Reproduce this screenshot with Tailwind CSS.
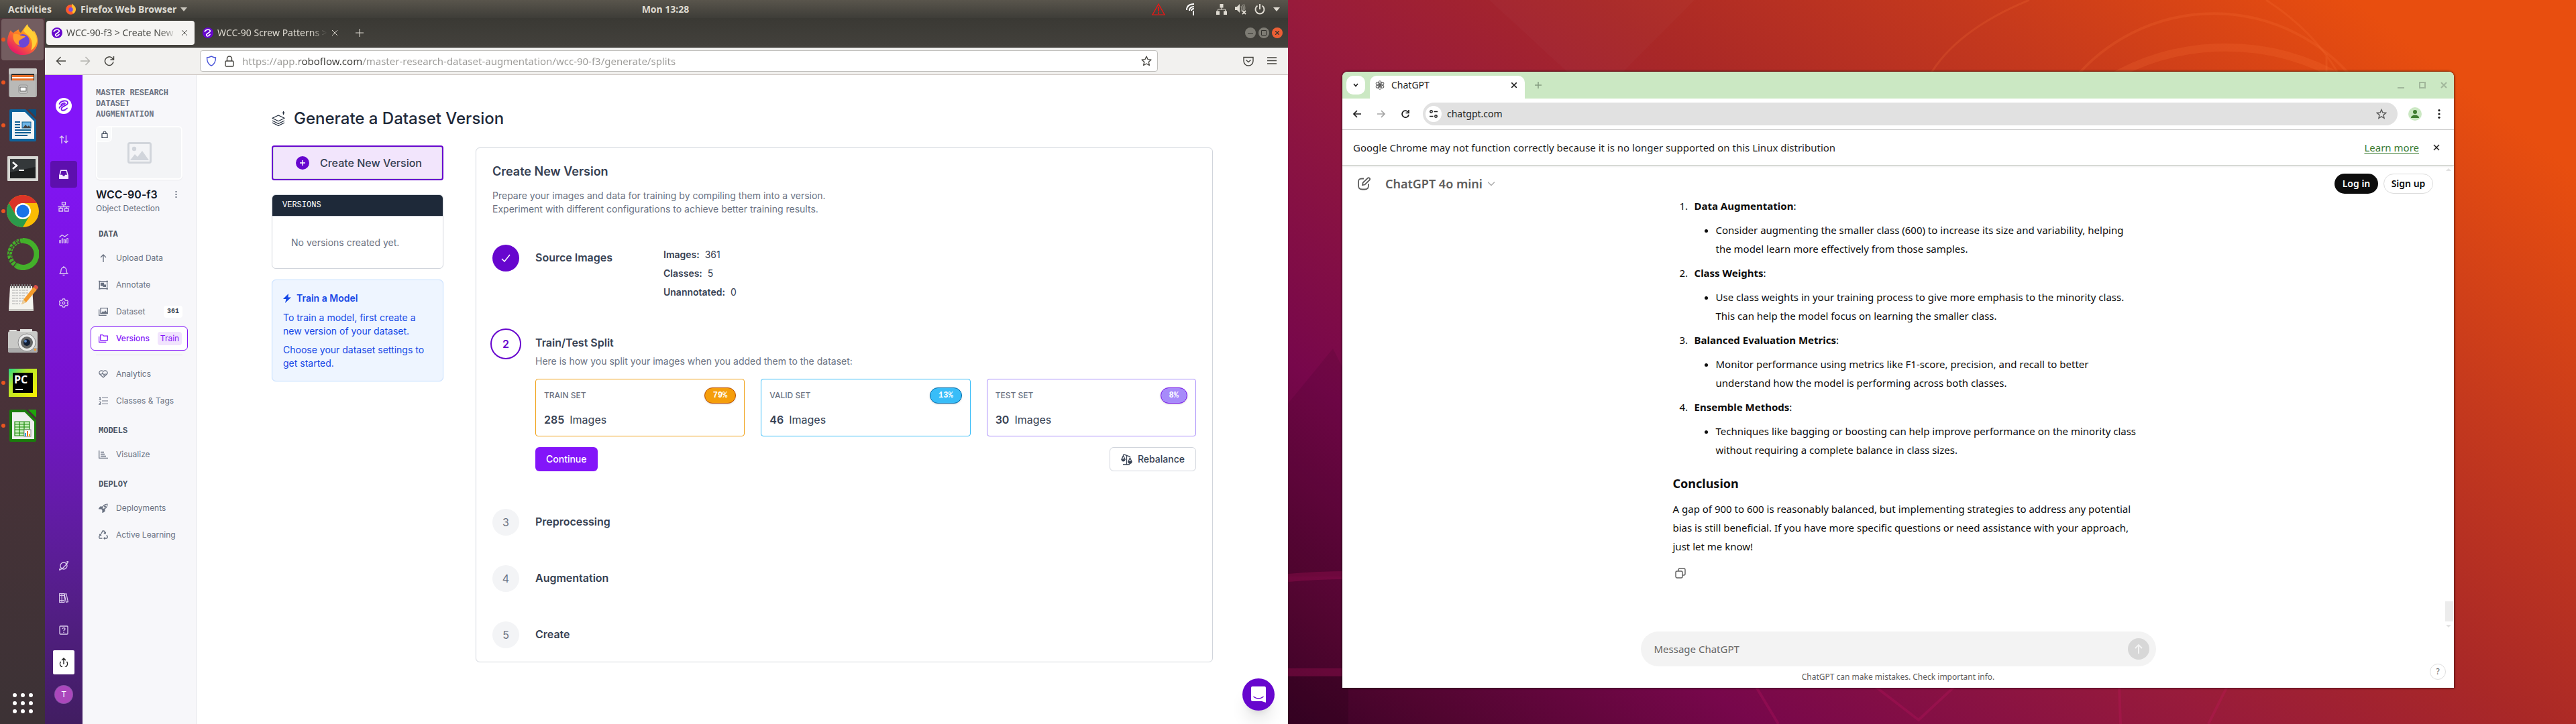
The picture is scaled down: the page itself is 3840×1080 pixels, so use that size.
<!DOCTYPE html>
<html lang="en">
<head>
  <meta charset="UTF-8">
  <meta name="viewport" content="width=device-width, initial-scale=1.0">
  <title>Desktop</title>
  <script src="https://cdn.jsdelivr.net/npm/@tailwindcss/browser@4"></script>
</head>
<body class="flex h-screen overflow-hidden bg-black font-['Inter',sans-serif]">

  <!-- Left monitor -->
  <div class="flex h-full w-1/2 flex-col">
    <!-- Top panel -->
    <header class="grid h-[27px] shrink-0 grid-cols-3 items-center bg-linear-to-b from-[#59554c] to-[#3e3d38] px-3 font-['Noto_Sans',sans-serif] text-sm font-bold text-[#dfdbd2]">
      <div class="flex items-center gap-5">
        <button>Activities</button>
        <button class="flex items-center gap-1.5">
          <svg class="size-[17px]" viewBox="0 0 48 48"><circle cx="24" cy="26" r="21" fill="#ff5a2c"/><path d="M28 1c9 7 18 14 17 26-1 8-5 14-11 17l-6-14z" fill="#ffbd2e"/><circle cx="24" cy="26" r="9" fill="#7b4ddb"/></svg>
          Firefox Web Browser
          <svg class="h-1.5 w-2.5" viewBox="0 0 10 6"><path d="M0 0h10L5 6z" fill="#c9c5bc"/></svg>
        </button>
      </div>
      <time class="ml-16 text-center">Mon 13:28</time>
      <div class="flex items-center justify-end text-[#dfdbd2]">
        <svg class="mr-[30px] h-[18px] w-5" viewBox="0 0 20 18" fill="none" stroke="#f11" stroke-width="1.2"><path d="M10 1 1 17h18z"/><path d="M10 6v6M10 13.500v2" stroke-width="2"/></svg>
        <svg class="mr-[30px] h-5 w-4" viewBox="0 0 16 20" fill="none" stroke="#fff" stroke-width="2"><path d="M2 11C2 5 6 2 13 2M6 12c0-4 2-6 7-6M9 12c0-2 2-3 4-3M12 12v7"/></svg>
        <svg class="mr-3 size-4" viewBox="0 0 16 16" fill="currentColor"><path d="M5.500 0h5v5.500h-5zM0 10.500h5V16H0zM11 10.500h5V16h-5z"/><path d="M8 5v3.500M2.500 11V8h11v3" fill="none" stroke="currentColor"/></svg>
        <svg class="mr-3 size-[17px]" viewBox="0 0 17 17" fill="currentColor"><path d="M0 5h3l4-4v13l-4-4H0z"/><path d="M9 4q2 4 0 8M11 2q3 6 0 10M13 1q3 6 1 9" fill="none" stroke="#8b887f" stroke-width="1.500"/><path d="m11 11 5 5m0-5-5 5" stroke="currentColor" stroke-width="1.800"/></svg>
        <svg class="mr-3 size-4" viewBox="0 0 16 16" fill="none" stroke="currentColor" stroke-width="2"><path d="M8 0v8M4.500 2.500a6.500 6.500 0 1 0 7 0"/></svg>
        <svg class="h-1.5 w-2.5" viewBox="0 0 10 6"><path d="M0 0h10L5 6z" fill="currentColor"/></svg>
      </div>
    </header>

    <div class="flex min-h-0 flex-1">
      <!-- Dock -->
      <nav class="flex w-[67px] shrink-0 flex-col items-center bg-linear-to-b from-[#50363c] via-[#4a3239] to-[#3c3235]">
        <button class="relative flex h-16 w-full items-center justify-center">
          <span class="absolute inset-x-[2px] inset-y-px rounded bg-[#735d60]"></span>
          <span class="absolute left-[2px] h-1.5 w-1.5 rounded-full bg-[#e95420]"></span>
          <svg class="relative size-12" viewBox="0 0 48 48"><defs><linearGradient id="fox" x1="1" y1="0" x2=".3" y2="1"><stop offset="0" stop-color="#fff04a"/><stop offset=".45" stop-color="#ff8a1e"/><stop offset="1" stop-color="#e5156b"/></linearGradient></defs><path d="M6 10c1 2 2 3 4 4 2-2 5-4 8-5 0 2 1 4 3 5 3-4 6-9 10-13 1 6 5 8 8 12 1-1 1-2 1-3 5 6 7 13 6 20-2 11-11 17-22 17S2 39 1 28c0-8 2-13 5-18z" fill="url(#fox)"/><circle cx="24" cy="26" r="10" fill="#6b46d6"/><path d="M10 16c4-1 8 0 11 2l7 1c-2 3-4 3-7 5-4 2-4 6-1 9-7-1-12-9-10-17z" fill="#ff9a2b"/><path d="M30 2c7 8 15 14 15 24-1 6-4 11-9 14 3-7 2-14-1-19-3-4-7-6-10-10z" fill="#ffcf35"/></svg>
        </button>
        <button class="relative flex h-16 w-full items-center justify-center">
          <span class="absolute left-[2px] h-1.5 w-1.5 rounded-full bg-[#e95420]"></span>
          <svg class="size-12" viewBox="0 0 48 48"><rect x="3" y="3" width="42" height="43" rx="3" fill="#a9a9a7"/><rect x="3" y="3" width="42" height="9" rx="2" fill="#c8c8c6"/><path d="M7 11h34v10H7z" fill="#2c2c2c"/><path d="M8 13h32v8H8z" fill="#e8702a"/><path d="M8 16h32v2H8z" fill="#fff"/><path d="M5 21h38v25H5z" fill="#b9b9b7"/><rect x="18" y="28" width="13" height="12" rx="2" fill="#d8d8d6" stroke="#8b8b8b"/><rect x="20" y="31" width="9" height="6" fill="#fff" stroke="#555"/></svg>
        </button>
        <button class="relative flex h-16 w-full items-center justify-center">
          <span class="absolute left-[2px] h-1.5 w-1.5 rounded-full bg-[#e95420]"></span>
          <svg class="size-12" viewBox="0 0 48 48"><path d="M6 0h22l16 16v30a2 2 0 0 1-2 2H6a2 2 0 0 1-2-2V2a2 2 0 0 1 2-2z" fill="#0e639c"/><path d="M32 0h12v12z" fill="#0b4f7f"/><path d="M8 4h19l14 14v26H8z" fill="#f3f5f7"/><path d="M12 19h8M12 23h8M12 27h8M12 31h24M12 35h24M12 39h19" stroke="#0c5d92" stroke-width="2"/><rect x="23" y="19" width="13" height="9" fill="#6fb4e5" stroke="#0c5d92"/><path d="m24 28 4-5 3 3 2-2 3 4z" fill="#444"/></svg>
        </button>
        <button class="relative flex h-16 w-full items-center justify-center">
          <svg class="size-12" viewBox="0 0 48 48"><rect x="1" y="6" width="46" height="37" rx="1" fill="#d7d7d3"/><rect x="5" y="10" width="38" height="29" fill="#1d1f20"/><path d="M5 10h38v12L5 30z" fill="#34383a"/><path d="m9 15 6 5-6 5" fill="none" stroke="#fff" stroke-width="2.500"/><path d="M18 27h8" stroke="#fff" stroke-width="2"/></svg>
        </button>
        <button class="relative flex h-16 w-full items-center justify-center">
          <span class="absolute left-[2px] h-1.5 w-1.5 rounded-full bg-[#e95420]"></span>
          <svg class="size-12" viewBox="0 0 48 48"><circle cx="24" cy="24" r="24" fill="#fbbc04"/><path d="M3.200 12A24 24 0 0 1 44.800 12H24a12 12 0 0 0-10.400 18z" fill="#db3427"/><path d="M3.200 12A24 24 0 0 0 24 48l10.400-18A12 12 0 0 1 13.600 30z" fill="#2b9a4b"/><circle cx="24" cy="24" r="12" fill="#fff"/><circle cx="24" cy="24" r="9.500" fill="#1a73e8"/></svg>
        </button>
        <button class="relative flex h-16 w-full items-center justify-center">
          <svg class="size-12" viewBox="0 0 48 48" fill="none" stroke="#43b02a"><path d="M24 4a20 20 0 1 1-10 37" stroke-width="8"/><path d="M24 4A20 20 0 0 0 14 41" stroke-width="7" stroke-dasharray="4 1.500"/><path d="m6 14 12-8M2 26l8-14M3 36l6-14M14 3l8 6" stroke="#4c343a"/></svg>
        </button>
        <button class="relative flex h-16 w-full items-center justify-center">
          <svg class="size-12" viewBox="0 0 48 48"><path d="M5 8h33l2 36H3z" fill="#f4f3ef"/><path d="M3 42h37v3H3z" fill="#c9c8c3"/><path d="M8 14h25M8 18h25M8 22h20M8 26h18M8 30h16M8 34h12" stroke="#aaa" stroke-dasharray="4 1"/><path d="M7 5v6M11 5v6M15 5v6M19 5v6M23 5v6M27 5v6M31 5v6M35 5v6" stroke="#777" stroke-width="2"/><path d="m22 35 3-7 15-19 5 4-16 19z" fill="#f39a2d"/><path d="m40 9 2-3q4 0 5 4l-2 3z" fill="#e0524a"/><path d="m22 35 3-7 4 4z" fill="#e9cfa0"/></svg>
        </button>
        <button class="relative flex h-16 w-full items-center justify-center">
          <svg class="size-12" viewBox="0 0 48 48"><rect x="2" y="11" width="44" height="32" rx="3" fill="#c9c9c7"/><path d="M4 11V9h10l2 2zM20 8h18v4H20z" fill="#e2e2e0"/><path d="M2 36h44v5a2 2 0 0 1-2 2H4a2 2 0 0 1-2-2z" fill="#aaa"/><circle cx="30" cy="28" r="13" fill="#e9e9e9" stroke="#8a8a8a"/><circle cx="30" cy="28" r="9" fill="#666"/><circle cx="30" cy="28" r="5" fill="#111d33"/><circle cx="28" cy="26" r="2" fill="#5e86c5"/><path d="M41 37h3v3h-3z" fill="#f39a2d"/></svg>
        </button>
        <button class="relative flex h-16 w-full items-center justify-center">
          <span class="absolute left-[2px] h-1.5 w-1.5 rounded-full bg-[#e95420]"></span>
          <svg class="size-12" viewBox="0 0 48 48"><defs><linearGradient id="pc" x1="0" y1="0" x2="1" y2="1"><stop offset="0" stop-color="#21d789"/><stop offset=".35" stop-color="#b6e62a"/><stop offset="1" stop-color="#fcf000"/></linearGradient></defs><rect x="3" y="3" width="42" height="42" fill="url(#pc)"/><rect x="9" y="9" width="30" height="30" fill="#000"/><text x="11" y="25" fill="#fff" font-family="Open Sans" font-weight="700" font-size="16">PC</text><path d="M13 34h11" stroke="#fff" stroke-width="2"/></svg>
        </button>
        <button class="relative flex h-16 w-full items-center justify-center">
          <span class="absolute left-[2px] h-1.5 w-1.5 rounded-full bg-[#e95420]"></span>
          <svg class="size-12" viewBox="0 0 48 48"><path d="M6 0h22l16 16v30a2 2 0 0 1-2 2H6a2 2 0 0 1-2-2V2a2 2 0 0 1 2-2z" fill="#1a7d0c"/><path d="M32 0h12v12z" fill="#1fa50c"/><path d="M8 4h19l14 14v26H8z" fill="#eee"/><path d="M12 18h22v21H12z" fill="#c8f0bd"/><path d="M12 18h22v21H12zM12 22h22M12 26h22M12 30h22M12 35h22M19 18v21M26 18v21" fill="none" stroke="#1c8a0c" stroke-width="1.200"/><rect x="26" y="30" width="10" height="10" fill="#fff" stroke="#888"/><path d="M28 40v-5" stroke="#2a9fe0" stroke-width="2"/><path d="M31 40v-8" stroke="#e8702a" stroke-width="2"/><path d="M34 40v-4" stroke="#f2b200" stroke-width="2"/></svg>
        </button>
        <button class="mt-auto mb-4 grid grid-cols-3 gap-1.5" aria-label="Show applications">
          <i class="size-1.5 rounded-full bg-white"></i><i class="size-1.5 rounded-full bg-white"></i><i class="size-1.5 rounded-full bg-white"></i>
          <i class="size-1.5 rounded-full bg-white"></i><i class="size-1.5 rounded-full bg-white"></i><i class="size-1.5 rounded-full bg-white"></i>
          <i class="size-1.5 rounded-full bg-white"></i><i class="size-1.5 rounded-full bg-white"></i><i class="size-1.5 rounded-full bg-white"></i>
        </button>
      </nav>

      <!-- Firefox -->
      <section class="flex min-w-0 flex-1 flex-col bg-white">
        <div class="flex h-11 shrink-0 items-center border-b border-[#2b2a27] bg-linear-to-b from-[#3a3934] to-[#43413c] pr-2 pl-[2px] font-['Noto_Sans',sans-serif] text-sm text-[#dfdbd2]">
          <div class="flex h-9 w-[221px] items-center gap-1.5 rounded bg-[#f5f4f2] pr-2.5 pl-2 text-[#4a4a46]">
            <svg class="size-4 shrink-0" viewBox="0 0 24 24"><circle cx="12" cy="12" r="12" fill="#6706ce"/><path d="M5 9C7 4 16 3.500 17 7.500S7.500 13 8.500 17s6 2 8-1.500" fill="none" stroke="#fff" stroke-width="2.500" stroke-linecap="round"/></svg>
            <span class="flex-1 mask-r-from-85% whitespace-nowrap">WCC-90-f3 &gt; Create New</span>
            <svg class="size-2.5 shrink-0" viewBox="0 0 10 10" stroke="currentColor"><path d="m1 1 8 8m0-8-8 8"/></svg>
          </div>
          <div class="ml-1 flex h-9 w-[220px] items-center gap-1.5 pr-2.5 pl-2">
            <svg class="size-4 shrink-0" viewBox="0 0 24 24"><circle cx="12" cy="12" r="12" fill="#6706ce"/><path d="M5 9C7 4 16 3.500 17 7.500S7.500 13 8.500 17s6 2 8-1.500" fill="none" stroke="#fff" stroke-width="2.500" stroke-linecap="round"/></svg>
            <span class="flex-1 mask-r-from-85% whitespace-nowrap">WCC-90 Screw Patterns &gt;</span>
            <svg class="size-2.5 shrink-0" viewBox="0 0 10 10" stroke="currentColor"><path d="m1 1 8 8m0-8-8 8"/></svg>
          </div>
          <button class="ml-4" aria-label="New tab"><svg class="size-3" viewBox="0 0 12 12" stroke="currentColor"><path d="M6 0v12M0 6h12"/></svg></button>
          <div class="ml-auto flex gap-1">
            <button class="flex size-4 items-center justify-center rounded-full bg-[#7e7c74]" aria-label="Minimize"><svg class="size-2" viewBox="0 0 8 8" stroke="#33322e"><path d="M0 4.500h8"/></svg></button>
            <button class="flex size-4 items-center justify-center rounded-full bg-[#7e7c74]" aria-label="Maximize"><svg class="size-2" viewBox="0 0 8 8" fill="none" stroke="#33322e"><path d="M.5.500h7v7h-7z"/></svg></button>
            <button class="flex size-4 items-center justify-center rounded-full bg-[#ec5f35]" aria-label="Close"><svg class="size-1.5" viewBox="0 0 6 6" stroke="#33322e" stroke-width="1.300"><path d="m0 0 6 6m0-6L0 6"/></svg></button>
          </div>
        </div>
        <div class="flex h-[41px] shrink-0 items-center border-b border-[#c8c0bb] bg-[#f2f1ef] pr-4 pl-4 text-[#45443f]">
          <button aria-label="Back"><svg class="size-4" viewBox="0 0 16 16" fill="none" stroke="currentColor" stroke-width="1.400"><path d="M15 8H1.500m6-6-6 6 6 6"/></svg></button>
          <button class="ml-5 text-[#b3b2af]" aria-label="Forward"><svg class="size-4" viewBox="0 0 16 16" fill="none" stroke="currentColor" stroke-width="1.400"><path d="M1 8h13.500m-6-6 6 6-6 6"/></svg></button>
          <button class="ml-5" aria-label="Reload"><svg class="size-4" viewBox="0 0 16 16" fill="none" stroke="currentColor" stroke-width="1.500"><path d="M14 9a6.300 6.300 0 1 1-2-5.500L14.500 6"/><path d="M14.500 1v5h-5"/></svg></button>
          <div class="ml-[127px] flex h-8 flex-1 items-center rounded border border-[#c0bfbc] bg-white pr-2 pl-2">
            <svg class="size-4" viewBox="0 0 16 16" fill="none" stroke="#4a56d8" stroke-width="1.400"><path d="M8 1c2 1 4 2 6.500 2 0 6-2 10-6.500 12C3.500 13 1.500 9 1.500 3 4 3 6 2 8 1z"/></svg>
            <svg class="ml-3 h-[17px] w-3.5" viewBox="0 0 14 17" fill="none" stroke="currentColor" stroke-width="1.400"><rect x="1" y="8" width="12" height="8" rx="1.500"/><path d="M3.500 8V4.500a3.500 3.500 0 0 1 7 0V8"/></svg>
            <input aria-label="Address" class="ml-3 flex-1 bg-[linear-gradient(to_right,#9a9996_85px,#3a3935_85px,#3a3935_179px,#9a9996_179px)] bg-clip-text font-['Noto_Sans',sans-serif] text-[15px] text-transparent" value="https://app.roboflow.com/master-research-dataset-augmentation/wcc-90-f3/generate/splits">
            <svg class="size-4" viewBox="0 0 16 16" fill="none" stroke="currentColor" stroke-width="1.300" stroke-linejoin="round"><path d="m8 1 2 4.600 5 .5-3.700 3.400 1 5L8 12l-4.300 2.500 1-5L1 6.100l5-.5z"/></svg>
          </div>
          <svg class="ml-[127px] size-4" viewBox="0 0 16 16" fill="none" stroke="currentColor" stroke-width="1.400"><path d="M1 2.500h14V8A7 7 0 0 1 1 8z"/><path d="m4.500 6.500 3.500 3 3.500-3"/></svg>
          <button class="mr-px ml-5" aria-label="Menu"><svg class="h-3 w-3.5" viewBox="0 0 14 12" stroke="currentColor" stroke-width="1.400"><path d="M0 1h14M0 5.500h14M0 10h14"/></svg></button>
        </div>

        <div class="flex min-h-0 flex-1">
          <!-- Icon rail -->
          <nav class="flex w-14 shrink-0 flex-col items-center bg-linear-to-b from-[#8315f9] from-10% via-[#7512cc] via-50% to-[#411d61] pt-[34px] pb-5 text-[#dccdee]">
            <svg class="mb-[18px] size-6 shrink-0" viewBox="0 0 24 24"><circle cx="12" cy="12" r="12" fill="#fff"/><path d="M5.500 9C8 3.500 17.500 3 18 7.500c.3 4-8.500 4-9.500 8.500-.7 3.500 4.500 4 8.500-.5M8 10.500c2-3 6-3.500 6-2s-7 2.500-8.500 6.500" fill="none" stroke="#7a14ee" stroke-width="1.800" stroke-linecap="round"/></svg>
            <button class="flex size-10 items-center justify-center" aria-label="Transfers"><svg class="h-3 w-3.5" viewBox="0 0 14 12" fill="none" stroke="currentColor" stroke-width="1.400"><path d="M4 12V1M1 4l3-3 3 3M10.500 0v11M7.500 8l3 3 3-3"/></svg></button>
            <button class="mt-3 flex size-10 items-center justify-center rounded bg-[#5d0fae] text-[#f3e8ff]" aria-label="Projects"><svg class="size-3.5" viewBox="0 0 14 14" fill="none" stroke="currentColor" stroke-width="1.500"><path d="M2.800 1.200h8.400L13.200 9v4H.800V9z"/><path d="M1 8.500h3.500l1 2h3l1-2H13V13H1z" fill="currentColor"/></svg></button>
            <button class="mt-1 flex h-12 items-center" aria-label="Workflows"><svg class="h-[15px] w-[18px]" viewBox="0 0 18 15" fill="none" stroke="currentColor" stroke-width="1.300"><path d="M6.500.700h5v4h-5zM2 10h5.500v4H2zM10.500 10H16v4h-5.500zM9 4.700v2.800M.500 7.500h17M4.700 7.500V10M13.300 7.500V10"/></svg></button>
            <button class="flex h-12 items-center" aria-label="Monitoring"><svg class="size-3.5" viewBox="0 0 14 14" fill="none" stroke="currentColor"><path d="m.5 5 4-3.500 4 2.500L13.500.500" stroke-width="1.400"/><path d="M.700 9.500h1.600v4H.700zM4.300 7h1.600v6.500H4.300zM8 8.500h1.600v5H8zM11.700 6.500h1.600v7h-1.600z"/></svg></button>
            <button class="flex h-12 items-center" aria-label="Notifications"><svg class="size-3.5" viewBox="0 0 14 14" fill="none" stroke="currentColor" stroke-width="1.300"><path d="M7 0v2M1.500 11c1-1 1.500-2 1.500-5a4 4 0 0 1 8 0c0 3 .5 4 1.500 5zM5.500 13.300h3"/></svg></button>
            <button class="flex h-12 items-center" aria-label="Settings"><svg class="size-3.5" viewBox="0 0 14 14" fill="none" stroke="currentColor" stroke-width="1.300" stroke-linejoin="round"><path d="M5.500.800h3L9 2.800l1.300.8 2-.6 1.400 2.500L12.200 7l1.500 1.500-1.400 2.500-2-.6-1.300.8-.5 2h-3l-.5-2-1.300-.8-2 .6L.300 8.500 1.800 7 .300 5.500 1.700 3l2 .6L5 2.800z"/><circle cx="7" cy="7" r="1.800"/></svg></button>
            <button class="mt-auto flex h-12 items-center" aria-label="Universe"><svg class="size-3.5" viewBox="0 0 14 14" fill="none" stroke="currentColor" stroke-width="1.300"><circle cx="7" cy="7" r="5"/><path d="M2.500 9.500C-1 14.500.500 14.500 6 10c5-4.500 9.500-10.500 7-9.500L10.500 1.500"/></svg></button>
            <button class="flex h-12 items-center" aria-label="Docs"><svg class="size-3.5" viewBox="0 0 14 14" fill="none" stroke="currentColor" stroke-width="1.200"><path d="M.7.700h3.500v12.600H.700zM4.200.700h3.600v12.600H4.200zM.700 3.500h7M.700 10.500h7M8 1.300l2.800-.6 2.600 12-2.800.6z"/></svg></button>
            <button class="flex h-12 items-center" aria-label="Help"><svg class="size-3.5" viewBox="0 0 14 14" fill="none" stroke="currentColor" stroke-width="1.300"><rect x="1" y="1" width="12" height="12" rx="1"/><path d="M5 5.200C5 3 9 3 9 5.200 9 6.700 7 6.500 7 8.200M7 9.700v1.400"/></svg></button>
            <span class="flex h-12 items-center"><button class="flex h-9 w-8 items-center justify-center rounded-xs bg-white text-[#202020]" aria-label="Upload"><svg class="size-3.5" viewBox="0 0 14 14" fill="none" stroke="currentColor" stroke-width="1.400"><path d="M7 10V1M4 4l3-3 3 3M2.500 6a5.500 5.500 0 1 0 9 0"/></svg></button></span>
            <span class="flex h-12 items-center"><button class="size-[26px] rounded-full bg-[#ab47bc] text-xs text-white ring-1 ring-[#8a55a8]">T</button></span>
          </nav>

          <!-- Project sidebar -->
          <aside class="w-[170px] shrink-0 border-r border-gray-200 bg-[#f7f7fa] px-3 pt-[19px] text-xs text-gray-500">
            <div class="px-2">
              <p class="font-['Liberation_Mono',monospace] text-xs leading-4 font-bold">MASTER RESEARCH<br>DATASET<br>AUGMENTATION</p>
              <div class="relative mt-[9px] flex h-20 items-center justify-center rounded-md border-2 border-white bg-gray-100 shadow-xs">
                <span class="absolute top-0 left-0 flex size-[21px] items-center justify-center rounded-br-md bg-[#f9fafb] ring-1 ring-white"><svg class="h-[11px] w-2.5 text-gray-700" viewBox="0 0 10 11" fill="none" stroke="currentColor" stroke-width="1.200"><path d="M1 4.500h8v6H1zM3 4.500V3a2 2 0 0 1 4 0v1.500"/></svg></span>
                <svg class="h-8 w-9" viewBox="0 0 36 32" fill="none" stroke="#d1d5db" stroke-width="3"><rect x="1.500" y="1.500" width="33" height="29" rx="2"/><circle cx="10" cy="10" r="3.200" fill="#d1d5db" stroke="none"/><path d="m4 27 7-9 4 4 7-9 10 14z" fill="#d1d5db" stroke="none"/></svg>
              </div>
              <div class="mt-2.5 flex h-6 items-center justify-between text-base font-semibold text-gray-900">WCC-90-f3
                <button class="mr-2" aria-label="More"><svg class="h-2.5 w-[3px]" viewBox="0 0 3 10" fill="#6b7280"><path d="M.5 0h2v2h-2zM.500 4h2v2h-2zM.500 8h2v2h-2z"/></svg></button>
              </div>
              <p class="mb-[5px] text-xs leading-[18px]">Object Detection</p>
            </div>
            <h3 class="flex h-10 items-center px-3 pt-2.5 font-['Liberation_Mono',monospace] font-bold text-gray-600">DATA</h3>
            <a href="#" class="flex h-10 items-center gap-3 px-3"><svg class="h-3 w-3.5" viewBox="0 0 14 12" fill="none" stroke="currentColor" stroke-width="1.400"><path d="M7 12V1M3 5l4-4 4 4"/></svg>Upload Data</a>
            <a href="#" class="flex h-10 items-center gap-3 px-3"><svg class="size-3.5" viewBox="0 0 14 14" fill="none" stroke="currentColor" stroke-width="1.300"><path d="M1.300 2h11.400v10.500H1.300zM0 1.500h2.500M11.500 1.500H14M0 13h2.500M11.500 13H14"/><path d="M3.500 4.500h4V8h-4z" fill="currentColor"/><path d="M7.500 6.500h3.500V10H6.500V8h1z" fill="currentColor" stroke="none"/></svg>Annotate</a>
            <a href="#" class="flex h-10 items-center gap-3 px-3"><svg class="h-3 w-3.5" viewBox="0 0 14 12" fill="none" stroke="currentColor" stroke-width="1.300"><path d="M3 .700h10.300v8H3zM.700 2.500v8.800h11"/><path d="m4 8 2.500-3L8 6.500 10 4l3 4z" fill="currentColor" stroke="none"/></svg>Dataset<span class="-mr-1 ml-auto flex h-[18px] w-7 items-center justify-center rounded bg-white font-['Liberation_Mono',monospace] text-[10px] font-bold text-gray-700">361</span></a>
            <a href="#" class="my-[2px] flex h-9 items-center gap-3 rounded-md border border-[#8315f9] bg-white px-[11px] font-medium text-[#8315f9]"><svg class="h-3 w-3.5" viewBox="0 0 14 12" fill="none" stroke="currentColor" stroke-width="1.200"><path d="M2.700.700h3.500l1.500 1.500h5.600v6.500H2.700zM.700 2.700v8.600h10.600"/></svg>Versions<span class="-mr-[3px] ml-auto flex h-5 w-9 items-center justify-center rounded bg-[#f1e4fd] font-normal">Train</span></a>
            <hr class="mx-2 mt-1.5 mb-2 border-gray-200">
            <a href="#" class="flex h-10 items-center gap-3 px-3"><svg class="h-3 w-3.5" viewBox="0 0 14 12" fill="none" stroke="currentColor" stroke-width="1.200"><path d="M7 11 2 6.500C-1 3 3-1 7 2c4-3 8 1 5 4.500zM2 6h3l1-2 2 4 1-2h3"/></svg>Analytics</a>
            <a href="#" class="flex h-10 items-center gap-3 px-3"><svg class="h-3 w-3.5" viewBox="0 0 14 12" fill="none" stroke="currentColor" stroke-width="1.200"><path d="M5 1.500h9M5 6h9M5 10.500h9M1 .500h1.200v4M.500 4.500h3M.700 7.500h2v1.700l-2 2h2.500"/></svg>Classes &amp; Tags</a>
            <h3 class="flex h-10 items-center px-3 pt-2.5 font-['Liberation_Mono',monospace] font-bold text-gray-600">MODELS</h3>
            <a href="#" class="flex h-10 items-center gap-3 px-3"><svg class="h-3 w-3.5" viewBox="0 0 14 12" fill="none" stroke="currentColor" stroke-width="1.300"><path d="M.700 0v11.300H14M3 2.500h5M3 5.500h6M3 8.500h8"/></svg>Visualize</a>
            <h3 class="flex h-10 items-center px-3 pt-2.5 font-['Liberation_Mono',monospace] font-bold text-gray-600">DEPLOY</h3>
            <a href="#" class="flex h-10 items-center gap-3 px-3"><svg class="h-3.5 w-3.5" viewBox="0 0 14 14" fill="none" stroke="currentColor" stroke-width="1.200"><path d="M5 8C6 4 9 1 13 1c0 4-3 7-7 8z"/><circle cx="9.500" cy="4.500" r="1"/><path d="M5.500 5H2.500L.500 8h4l1.500 1.500v4l3-2v-3L5 8z" fill="currentColor"/></svg>Deployments</a>
            <a href="#" class="flex h-10 items-center gap-3 px-3"><svg class="h-3.5 w-3.5" viewBox="0 0 14 14" fill="none" stroke="currentColor" stroke-width="1.400"><path d="m4 5 2-4h2l2 3.500M10.500 2.500 10 4.800l-2.200-.5M12 7l1.300 3-1 2H8M9.500 10.500 8 12l1.500 1.500M5.500 12h-4l-1-2L3 6M1 6.500 3 6l.7 2.200"/></svg>Active Learning</a>
          </aside>

          <!-- Main -->
          <main class="relative min-w-0 flex-1 bg-white px-28 pt-[49px] text-sm text-gray-700">
            <h1 class="flex h-8 items-center gap-3 text-2xl font-medium text-gray-800">
              <svg class="h-[22px] w-[21px]" viewBox="0 0 21 22" fill="none" stroke="currentColor" stroke-width="1.200" stroke-linejoin="round"><path d="m10 6 9 4.300-9 4.400-9-4.400zM1 14l9 4.500 9-4.500M1 17l9 4.500 9-4.500M17.500 0v5M15 2.500h5"/></svg>
              Generate a Dataset Version
            </h1>
            <div class="mt-6 flex items-start gap-12">
              <div class="w-64 shrink-0">
                <button class="flex h-[52px] w-full items-center rounded-sm border-2 border-[#6706ce] bg-[#f2e5fc] pl-[34px] text-base font-medium text-gray-700 inset-ring inset-ring-gray-300">
                  <svg class="mr-4 size-5" viewBox="0 0 20 20"><circle cx="10" cy="10" r="10" fill="#6706ce"/><path d="M10 6v8M6 10h8" stroke="#fff" stroke-width="1.400"/></svg>
                  Create New Version
                </button>
                <div class="mt-[21px] overflow-hidden rounded-md border border-gray-300">
                  <h2 class="-mx-px -mt-px flex h-8 items-center bg-gray-800 px-4 font-['Liberation_Mono',monospace] text-xs text-white">VERSIONS</h2>
                  <p class="flex h-[78px] items-center border-t border-gray-300 px-7 text-gray-500">No versions created yet.</p>
                </div>
                <div class="mt-4 flex flex-col gap-2 rounded-md border border-blue-200 bg-[#eef5ff] px-4 pt-[17px] pb-4 leading-5 text-blue-700">
                  <h2 class="mb-px flex items-center gap-2 font-semibold"><svg class="h-3.5 w-3" viewBox="0 0 12 14" fill="currentColor"><path d="M8 0 0 8h4.500L3 14l9-8.500H7.500z"/></svg>Train a Model</h2>
                  <p>To train a model, first create a<br>new version of your dataset.</p>
                  <p>Choose your dataset settings to<br>get started.</p>
                </div>
              </div>

              <div class="mt-[3px] min-w-0 flex-1 rounded-md border border-gray-300 px-6 pt-[23px] pb-5">
                <h2 class="text-lg leading-6 font-semibold">Create New Version</h2>
                <p class="mt-3.5 leading-5 text-gray-500">Prepare your images and data for training by compiling them into a version.<br>Experiment with different configurations to achieve better training results.</p>

                <div class="mt-[43px] flex">
                  <span class="flex size-10 items-center justify-center rounded-full bg-[#6706ce]"><svg class="h-3 w-3.5" viewBox="0 0 14 12" fill="none" stroke="#fff" stroke-width="1.500"><path d="m1 7 4 4 8-10"/></svg></span>
                  <h3 class="ml-6 w-[191px] pt-[7px] text-base leading-6 font-semibold">Source Images</h3>
                  <dl class="flex flex-col gap-2 pt-[5px] leading-5">
                    <div class="flex gap-2"><dt class="font-semibold">Images:</dt><dd>361</dd></div>
                    <div class="flex gap-2"><dt class="font-semibold">Classes:</dt><dd>5</dd></div>
                    <div class="flex gap-2"><dt class="font-semibold">Unannotated:</dt><dd>0</dd></div>
                  </dl>
                </div>

                <div class="mt-11 flex">
                  <span class="-ml-[3px] flex size-[46px] shrink-0 items-center justify-center rounded-full border-2 border-[#6706ce] text-base font-semibold text-[#6706ce]">2</span>
                  <div class="ml-[21px] flex-1 pt-[9px]">
                    <h3 class="text-base leading-6 font-semibold">Train/Test Split</h3>
                    <p class="mt-1.5 leading-5 text-gray-500">Here is how you split your images when you added them to the dataset:</p>
                    <div class="mt-4 grid grid-cols-3 gap-6">
                      <div class="rounded-sm border border-[#f0a117] p-3">
                        <div class="flex h-6 items-center justify-between text-xs font-medium text-gray-500">TRAIN SET<span class="flex h-6 items-center rounded-full border border-amber-700 bg-[#f59e0b] px-3 font-['Liberation_Mono',monospace] font-bold text-white shadow-sm">79%</span></div>
                        <p class="mt-3 text-base leading-6"><b class="mr-2 font-semibold">285</b>Images</p>
                      </div>
                      <div class="rounded-sm border border-[#38bdf8] p-3">
                        <div class="flex h-6 items-center justify-between text-xs font-medium text-gray-500">VALID SET<span class="flex h-6 items-center rounded-full border border-sky-700 bg-[#38bdf8] px-3 font-['Liberation_Mono',monospace] font-bold text-white shadow-sm">13%</span></div>
                        <p class="mt-3 text-base leading-6"><b class="mr-2 font-semibold">46</b>Images</p>
                      </div>
                      <div class="rounded-sm border border-[#a78bfa] p-3">
                        <div class="flex h-6 items-center justify-between text-xs font-medium text-gray-500">TEST SET<span class="flex h-6 items-center rounded-full border border-violet-700 bg-[#a78bfa] px-3 font-['Liberation_Mono',monospace] font-bold text-white shadow-sm">8%</span></div>
                        <p class="mt-3 text-base leading-6"><b class="mr-2 font-semibold">30</b>Images</p>
                      </div>
                    </div>
                    <div class="mt-4 flex h-9 justify-between font-medium">
                      <button class="rounded-md bg-[#8315f9] px-4 text-white">Continue</button>
                      <button class="flex items-center gap-2 rounded-md border border-gray-300 px-4">
                        <svg class="size-[17px]" viewBox="0 0 17 17" fill="none" stroke="currentColor" stroke-width="1.300"><path d="M3 1.500c3-1.500 5 2 11 2.500M8.500 2.500V16M3 16h10M3.500 2.500 1 8h5zM13.500 6 11 11.500h5z"/><path d="M.500 8.500h6c0 4-6 4-6 0zM10.500 12h6c0 4-6 4-6 0z" fill="currentColor" stroke="none"/></svg>Rebalance
                      </button>
                    </div>
                  </div>
                </div>

                <div class="mt-14 flex flex-col gap-11 text-base">
                  <div class="flex gap-6"><span class="flex size-10 items-center justify-center rounded-full bg-gray-100 text-gray-500">3</span><h3 class="pt-[7px] leading-6 font-semibold">Preprocessing</h3></div>
                  <div class="flex gap-6"><span class="flex size-10 items-center justify-center rounded-full bg-gray-100 text-gray-500">4</span><h3 class="pt-[7px] leading-6 font-semibold">Augmentation</h3></div>
                  <div class="flex gap-6"><span class="flex size-10 items-center justify-center rounded-full bg-gray-100 text-gray-500">5</span><h3 class="pt-[7px] leading-6 font-semibold">Create</h3></div>
                </div>
              </div>
            </div>
            <button class="absolute right-5 bottom-5 flex size-12 items-center justify-center rounded-full bg-[#6706ce] shadow-xl" aria-label="Open chat"><svg class="h-6 w-[22px]" viewBox="0 0 22 24"><path d="M2 0h18a2 2 0 0 1 2 2v22l-6-2H2a2 2 0 0 1-2-2V2a2 2 0 0 1 2-2z" fill="#fff"/><path d="M4 15.500q7 5 14 0" fill="none" stroke="#6706ce" stroke-width="1.500" stroke-linecap="round"/></svg></button>
          </main>
        </div>
      </section>
    </div>
  </div>

  <!-- Right monitor -->
  <div class="relative h-full w-1/2 overflow-hidden bg-[linear-gradient(38deg,#3a0226_0%,#50052f_7%,#77074b_21%,#981b3b_42%,#a92827_56%,#c5391d_72%,#e84e0f_90%)]">
    <svg class="absolute inset-0 size-full" viewBox="0 0 1920 1080" preserveAspectRatio="none" fill="none">
      <path d="M300 0h306L500 107h-84z" fill="#fff" fill-opacity=".02"/>
      <path d="M0 602 67 520l20 40v300H0z" fill="#000" fill-opacity=".08"/>
      <path d="M0 1008h90v72H0z" fill="#1a0010" fill-opacity=".2"/>
      <g stroke="#ff7a3c" stroke-opacity=".18">
        <path d="M1220 120a346 346 0 0 1 356 0" stroke-width="12"/>
        <path d="M1170 120a271 271 0 0 1 420 0" stroke-width="4"/>
        <path d="M955 115q40-70 150-115M1458 0q70 45 108 110M1548 80v30" stroke-width="3"/>
      </g>
      <g stroke="#d0156a" stroke-opacity=".22" stroke-width="4">
        <path d="M0 862q45-4 90-4" stroke-width="12"/>
        <path d="M0 1003h90" stroke-width="12"/>
        <path d="m695 1020 36 60M870 1020l70 54 58-54M1239 1020l2 60M1402 1020l-30 60"/>
      </g>
    </svg>

    <!-- Chrome -->
    <section class="absolute top-[107px] right-[182px] bottom-[54px] left-[81px] flex flex-col overflow-hidden rounded-t-lg bg-white font-['Noto_Sans',sans-serif] text-[15px] text-[#1f1f1f] shadow-[0_0_3px_1px_rgba(0,0,0,0.5)]">
      <div class="flex h-10 shrink-0 items-end bg-[#cbe8c3] pl-1.5">
        <button class="mb-1.5 flex size-7 items-center justify-center rounded-[10px] bg-white" aria-label="Search tabs"><svg class="h-1.5 w-2" viewBox="0 0 8 6" fill="none" stroke="currentColor" stroke-width="1.600"><path d="m1 1 3 3.500L7 1"/></svg></button>
        <div class="ml-[7px] flex h-[34px] w-[231px] items-center rounded-t-[10px] bg-white pr-3 pb-1.5 pl-2">
          <svg class="mr-2.5 size-3.5" viewBox="0 0 24 24" fill="none" stroke="#555" stroke-width="1.600"><ellipse cx="12" cy="7.500" rx="4" ry="6.500"/><ellipse cx="12" cy="7.500" rx="4" ry="6.500" transform="rotate(60 12 12)"/><ellipse cx="12" cy="7.500" rx="4" ry="6.500" transform="rotate(120 12 12)"/><ellipse cx="12" cy="7.500" rx="4" ry="6.500" transform="rotate(180 12 12)"/><ellipse cx="12" cy="7.500" rx="4" ry="6.500" transform="rotate(240 12 12)"/><ellipse cx="12" cy="7.500" rx="4" ry="6.500" transform="rotate(300 12 12)"/></svg>
          <span class="text-sm">ChatGPT</span>
          <button class="ml-auto" aria-label="Close tab"><svg class="size-2" viewBox="0 0 8 8" stroke="currentColor" stroke-width="1.600"><path d="m0 0 8 8m0-8L0 8"/></svg></button>
        </div>
        <button class="mb-[15px] ml-[15px] text-[#859c80]" aria-label="New tab"><svg class="size-2.5" viewBox="0 0 10 10" stroke="currentColor" stroke-width="1.500"><path d="M5 0v10M0 5h10"/></svg></button>
        <div class="mr-2.5 mb-[15px] ml-auto flex items-center gap-[22px] text-[#a1b79b]">
          <button aria-label="Minimize"><svg class="size-2.5" viewBox="0 0 10 10" stroke="currentColor" stroke-width="2"><path d="M0 9h10"/></svg></button>
          <button aria-label="Maximize"><svg class="size-2.5" viewBox="0 0 10 10" fill="none" stroke="currentColor" stroke-width="2"><path d="M1 1h8v8H1z"/></svg></button>
          <button aria-label="Close"><svg class="size-2.5" viewBox="0 0 10 10" stroke="currentColor" stroke-width="2"><path d="m1 1 8 8m0-8-8 8"/></svg></button>
        </div>
      </div>
      <div class="flex h-[47px] shrink-0 items-center border-b border-[#c9c9c9] pr-5 pl-4">
        <button aria-label="Back"><svg class="size-3" viewBox="0 0 12 12" fill="none" stroke="currentColor" stroke-width="1.700"><path d="M12 6H1m5-5L1 6l5 5"/></svg></button>
        <button class="ml-6 text-[#a5a5a5]" aria-label="Forward"><svg class="size-3" viewBox="0 0 12 12" fill="none" stroke="currentColor" stroke-width="1.700"><path d="M0 6h11M6 1l5 5-5 5"/></svg></button>
        <button class="ml-6" aria-label="Reload"><svg class="size-3" viewBox="0 0 12 12" fill="none" stroke="currentColor" stroke-width="1.700"><path d="M11 7a5 5 0 1 1-1.500-4.500L11 4"/><path d="M11 0v4.500H6.500"/></svg></button>
        <div class="ml-5 flex h-[34px] flex-1 items-center rounded-full bg-[#e1e1e1] pr-4 pl-1">
          <span class="flex size-6 items-center justify-center rounded-full bg-white"><svg class="size-3" viewBox="0 0 12 12" fill="none" stroke="currentColor" stroke-width="1.500"><circle cx="2.500" cy="2.500" r="1.700"/><path d="M6.500 2.500H12M0 9.500h5.500"/><circle cx="9.500" cy="9.500" r="1.700"/></svg></span>
          <input aria-label="Address" class="ml-2 flex-1 text-sm" value="chatgpt.com">
          <svg class="size-4 text-[#5c5c5c]" viewBox="0 0 16 16" fill="none" stroke="currentColor" stroke-width="1.400"><path d="m8 1.500 1.900 4.500 4.800.4-3.700 3.200 1.100 4.700L8 11.800l-4.100 2.500L5 9.600 1.300 6.400 6.100 6z"/></svg>
        </div>
        <svg class="ml-4 size-5" viewBox="0 0 20 20"><circle cx="10" cy="10" r="10" fill="#cbe8c3"/><circle cx="10" cy="7" r="3" fill="#3f7d2f"/><path d="M4 16c0-6 12-6 12 0z" fill="#3f7d2f"/></svg>
        <button class="ml-6" aria-label="Menu"><svg class="h-3.5 w-1" viewBox="0 0 4 14" fill="currentColor"><circle cx="2" cy="1.700" r="1.600"/><circle cx="2" cy="7" r="1.600"/><circle cx="2" cy="12.300" r="1.600"/></svg></button>
      </div>
      <div class="z-10 flex h-[53px] shrink-0 items-center border-b border-[#cdd1ca] bg-white px-4 shadow-sm">
        <p>Google Chrome may not function correctly because it is no longer supported on this Linux distribution</p>
        <a href="#" class="ml-auto text-[#3a7a2f] underline underline-offset-2">Learn more</a>
        <button class="mr-[5px] ml-[21px]" aria-label="Dismiss"><svg class="size-2.5" viewBox="0 0 10 10" stroke="currentColor" stroke-width="1.500"><path d="m1 1 8 8m0-8-8 8"/></svg></button>
      </div>

      <!-- ChatGPT page -->
      <div class="relative flex min-h-0 flex-1 flex-col text-[#0d0d0d]">
        <header class="flex h-[54px] shrink-0 items-center pr-[31px] pl-[22px]">
          <button class="text-[#5d5d5d]" aria-label="New chat"><svg class="size-5" viewBox="0 0 20 20" fill="none" stroke="currentColor" stroke-width="1.800"><path d="M10 2.500H7C3 2.500 2 4 2 8v4c0 5 1.500 6.500 6 6.500h3c5 0 6-2 6-6.500v-2"/><path d="m8 12 .7-3.500L16 1.500c2-1 4 1 2.700 2.800L11.500 11.500z"/></svg></button>
          <button class="ml-[22px] flex items-center gap-2 text-lg font-semibold text-[#5d5d5d]">ChatGPT 4o mini<svg class="h-1.5 w-2.5" viewBox="0 0 10 6" fill="none" stroke="#aaa" stroke-width="1.400"><path d="m0 .5 5 5 5-5"/></svg></button>
          <button class="ml-auto h-[30px] w-[65px] rounded-full bg-[#0d0d0d] text-sm font-semibold text-white">Log in</button>
          <button class="ml-2 h-[30px] w-[74px] rounded-full border border-[#dcdcdc] text-sm font-semibold">Sign up</button>
        </header>
        <article class="mx-auto w-[736px] flex-1 pl-8 leading-7">
          <ol class="-mt-2 ml-2 flex flex-col gap-2">
            <li class="grid grid-cols-[24px_1fr]"><span class="pl-0.5">1.</span><p><b class="font-bold">Data Augmentation</b>:</p>
              <ul class="col-start-2 mt-2 ml-8 list-disc"><li>Consider augmenting the smaller class (600) to increase its size and variability, helping<br>the model learn more effectively from those samples.</li></ul></li>
            <li class="grid grid-cols-[24px_1fr]"><span class="pl-0.5">2.</span><p><b class="font-bold">Class Weights</b>:</p>
              <ul class="col-start-2 mt-2 ml-8 list-disc"><li>Use class weights in your training process to give more emphasis to the minority class.<br>This can help the model focus on learning the smaller class.</li></ul></li>
            <li class="grid grid-cols-[24px_1fr]"><span class="pl-0.5">3.</span><p><b class="font-bold">Balanced Evaluation Metrics</b>:</p>
              <ul class="col-start-2 mt-2 ml-8 list-disc"><li>Monitor performance using metrics like F1-score, precision, and recall to better<br>understand how the model is performing across both classes.</li></ul></li>
            <li class="grid grid-cols-[24px_1fr]"><span class="pl-0.5">4.</span><p><b class="font-bold">Ensemble Methods</b>:</p>
              <ul class="col-start-2 mt-2 ml-8 list-disc"><li>Techniques like bagging or boosting can help improve performance on the minority class<br>without requiring a complete balance in class sizes.</li></ul></li>
          </ol>
          <h3 class="mt-5 text-lg leading-8 font-bold">Conclusion</h3>
          <p class="mt-2">A gap of 900 to 600 is reasonably balanced, but implementing strategies to address any potential<br>bias is still beneficial. If you have more specific questions or need assistance with your approach,<br>just let me know!</p>
          <button class="mt-[18px] ml-[3px] block text-[#5d5d5d]" aria-label="Copy"><svg class="size-4" viewBox="0 0 16 16" fill="none" stroke="currentColor" stroke-width="1.400"><rect x="1" y="5" width="10" height="10" rx="2"/><path d="M5 5V3a2 2 0 0 1 2-2h6a2 2 0 0 1 2 2v6a2 2 0 0 1-2 2h-2"/></svg></button>
        </article>
        <div class="mx-auto flex h-[52px] w-[768px] shrink-0 items-center rounded-full bg-[#f3f3f3] pr-2.5 pl-5">
          <input aria-label="Message ChatGPT" placeholder="Message ChatGPT" class="flex-1 placeholder:text-[#676767]">
          <button class="flex size-8 items-center justify-center rounded-full bg-[#d7d7d7] text-[#f3f3f3]" aria-label="Send"><svg class="size-3.5" viewBox="0 0 14 14" fill="none" stroke="currentColor" stroke-width="2"><path d="M7 14V1M2 6l5-5 5 5"/></svg></button>
        </div>
        <p class="flex h-8 shrink-0 items-center justify-center text-xs text-[#5d5d5d]">ChatGPT can make mistakes. Check important info.</p>
        <button class="absolute right-3 bottom-3 size-6 rounded-full border border-[#dedede] text-xs text-[#5d5d5d]">?</button>
        <span class="absolute right-px bottom-[99px] h-[30px] w-3 bg-[#ececec]"></span>
        <svg class="absolute top-1 right-1 h-1 w-2" viewBox="0 0 8 4" fill="#e2e2e2"><path d="m4 0 4 4H0z"/></svg>
        <svg class="absolute right-1 bottom-[90px] h-1 w-2" viewBox="0 0 8 4" fill="#e2e2e2"><path d="m4 4 4-4H0z"/></svg>
      </div>
    </section>
  </div>
</body>
</html>
